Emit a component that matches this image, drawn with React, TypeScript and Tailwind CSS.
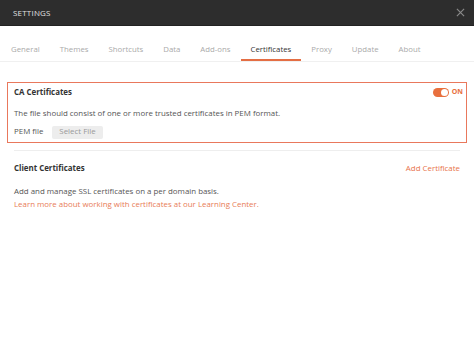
import React from "react";

const tabs = ["General", "Themes", "Shortcuts", "Data", "Add-ons", "Certificates", "Proxy", "Update", "About"];

export default function App() {
  return (
    <div className="w-[474px] h-[342px] bg-white overflow-hidden" style={{ fontFamily: '"Open Sans", "Liberation Sans", sans-serif' }}>
      <div className="h-[26px] bg-[#2d2d2d] border-b border-[#222] flex items-center justify-between pl-[13px] pr-[9px]">
        <span className="text-[8px] text-[#e0e0e0] tracking-[0.2px]">SETTINGS</span>
        <svg width="9" height="9" viewBox="0 0 10 10">
          <path d="M1 1L9 9M9 1L1 9" stroke="#8a8a8a" strokeWidth="1.3" />
        </svg>
      </div>
      <div className="flex pl-[1px] h-[36px] border-b border-[#f0f0f0]">
        {tabs.map((t) => (
          <div
            key={t}
            className={
              t === "Certificates"
                ? "px-[10px] flex items-center pt-[14px] text-[7.8px] text-[#333] border-b-2 border-[#e46e44]"
                : "px-[10px] flex items-center pt-[14px] text-[7.8px] text-[#aaa] border-b-2 border-transparent"
            }
          >
            {t}
          </div>
        ))}
      </div>
      <div className="px-[7px] pt-[20px]">
        <div className="h-[61px] border-[1.5px] border-[#e9785c] pl-[6px] pr-[3px] flex flex-col">
          <div className="flex items-center justify-between h-[15px] mt-[2px]">
            <span className="text-[7.9px] font-bold text-[#333]">CA Certificates</span>
            <div className="flex items-center gap-[3px]">
              <div className="w-[16px] h-[9px] rounded-full bg-[#e8703e] relative">
                <div className="absolute right-[1px] top-[1px] w-[7px] h-[7px] rounded-full bg-white" />
              </div>
              <span className="text-[7px] font-bold text-[#e8703e]">ON</span>
            </div>
          </div>
          <div className="text-[7.9px] text-[#555] mt-[8px]">The file should consist of one or more trusted certificates in PEM format.</div>
          <div className="flex items-center mt-[6px] gap-[9px]">
            <span className="text-[7.9px] text-[#555]">PEM file</span>
            <span className="text-[7.9px] text-[#999] bg-[#ededed] px-[7px] h-[13px] flex items-center rounded-[2px]">Select File</span>
          </div>
        </div>
        <div className="mx-[7px] mt-[7px] border-t border-[#eee]" />
        <div className="px-[7px] pt-[12px]">
          <div className="flex items-center justify-between">
            <span className="text-[7.9px] font-bold text-[#333]">Client Certificates</span>
            <span className="text-[7.9px] text-[#e8734a]">Add Certificate</span>
          </div>
          <div className="text-[7.9px] text-[#555] mt-[10px] leading-[13px]">Add and manage SSL certificates on a per domain basis.</div>
          <div className="text-[7.9px] text-[#e87c58] leading-[13px]">Learn more about working with certificates at our Learning Center.</div>
        </div>
      </div>
    </div>
  );
}
